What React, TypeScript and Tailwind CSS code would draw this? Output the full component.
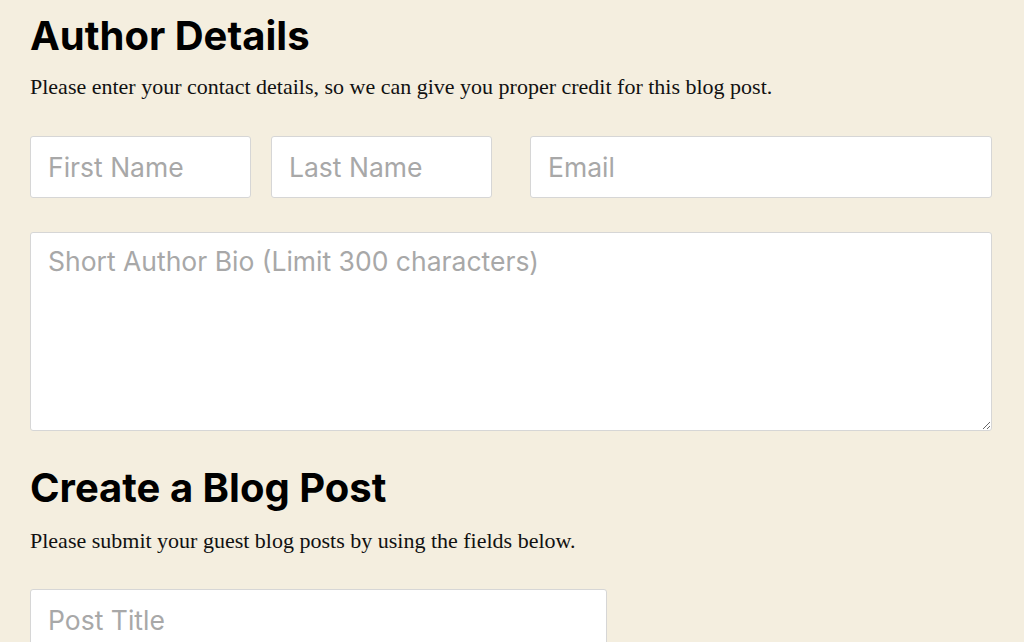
export default function App() {
  const input =
    "h-[62px] w-full rounded-[3px] border border-[#d6d6d6] bg-white px-[17px] font-['Inter',sans-serif] text-[26.5px] text-[#222] placeholder:text-[#a8a8a8] outline-none";
  return (
    <div className="h-[642px] overflow-hidden bg-[#f4eedf] px-[30px] pt-[12px]">
      {/* Author details */}
      <h2 className="font-['Inter',sans-serif] text-[40px] font-bold leading-[48px] text-black">
        Author Details
      </h2>
      <p className="mt-[13px] font-['Liberation_Serif',serif] text-[22px] leading-[28px] text-[#111]">
        Please enter your contact details, so we can give you proper credit for this blog post.
      </p>

      <div className="mt-[35px] grid w-[962px] grid-cols-2 gap-[38px]">
        <div className="grid grid-cols-2 gap-[20px]">
          <input className={input} placeholder="First Name" />
          <input className={input} placeholder="Last Name" />
        </div>
        <input className={input} placeholder="Email" />
      </div>

      <textarea
        className="mt-[34px] block h-[199px] w-[962px] rounded-[3px] border border-[#d6d6d6] bg-white px-[17px] pt-[12px] font-['Inter',sans-serif] text-[26.5px] leading-[32px] text-[#222] placeholder:text-[#a8a8a8] outline-none"
        placeholder="Short Author Bio (Limit 300 characters)"
      />

      {/* Blog post */}
      <h2 className="mt-[33px] font-['Inter',sans-serif] text-[40px] font-bold leading-[48px] text-black">
        Create a Blog Post
      </h2>
      <p className="mt-[15px] font-['Liberation_Serif',serif] text-[22px] leading-[28px] text-[#111]">
        Please submit your guest blog posts by using the fields below.
      </p>

      <div className="mt-[34px] w-[577px]">
        <input className={input} placeholder="Post Title" />
      </div>
    </div>
  );
}
